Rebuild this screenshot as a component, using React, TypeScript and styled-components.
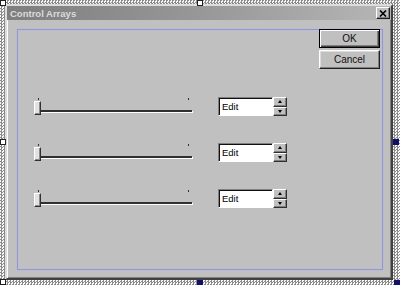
import React from "react";
import styled, { createGlobalStyle } from "styled-components";

const GlobalStyle = createGlobalStyle`
  html, body {
    margin: 0;
    padding: 0;
    width: 400px;
    height: 285px;
    overflow: hidden;
    background: #ffffff;
  }
  #root {
    width: 400px;
    height: 285px;
  }
`;

const ui = `"Liberation Sans", Arial, sans-serif`;

// hatched selection frame of the form designer
const Selection = styled.div`
  position: relative;
  box-sizing: border-box;
  width: 400px;
  height: 285px;
  padding: 4px 7px 5px 5px;
  background: repeating-conic-gradient(#8a8a8a 0 25%, #f8f8f8 0 50%) 0 0 / 3px 3px;
`;

const Handle = styled.div<{ $filled?: boolean }>`
  position: absolute;
  box-sizing: border-box;
  width: 6px;
  height: 6px;
  background: ${(p) => (p.$filled ? "#10106a" : "#ffffff")};
  border: 1px solid ${(p) => (p.$filled ? "#10106a" : "#202020")};
`;

const Window = styled.div`
  box-sizing: border-box;
  width: 100%;
  height: 100%;
  display: flex;
  flex-direction: column;
  background: #c0c0c0;
  border: 2px solid;
  border-color: #dcdcdc #404040 #404040 #dcdcdc;
  box-shadow: inset 1px 1px 0 #ffffff, inset -1px -1px 0 #808080;
`;

const TitleBar = styled.div`
  height: 14px;
  display: flex;
  align-items: center;
  justify-content: space-between;
  padding: 0 1px 0 3px;
  background: linear-gradient(90deg, #7e7e7e 0%, #9a9a9a 55%, #b6b6b6 100%);
`;

const Title = styled.span`
  font-family: ${ui};
  font-weight: bold;
  font-size: 9.5px;
  color: #dcdcdc;
`;

const CloseBox = styled.div`
  box-sizing: border-box;
  width: 14px;
  height: 12px;
  display: flex;
  align-items: center;
  justify-content: center;
  background: #c0c0c0;
  border: 1px solid;
  border-color: #ffffff #202020 #202020 #ffffff;
  box-shadow: inset -1px -1px 0 #808080;
`;

const Body = styled.div`
  flex: 1;
  display: flex;
  padding: 9px 8px 8px 10px;
`;

const DesignArea = styled.div`
  flex: 1;
  display: flex;
  flex-direction: column;
  border: 1px solid #9898c4;
  box-shadow: 0 0 0 1px #babad4, inset 0 0 0 1px #bcbcd4;
  padding: 0 2px 0 16px;
`;

const ButtonStack = styled.div`
  display: flex;
  flex-direction: column;
  align-items: flex-end;
  gap: 2px;
  margin-top: -1px;
`;

const Button = styled.div<{ $default?: boolean }>`
  box-sizing: border-box;
  width: 61px;
  height: 19px;
  display: flex;
  align-items: center;
  justify-content: center;
  font-family: ${ui};
  font-size: 10px;
  color: #101010;
  background: #c0c0c0;
  border: 1px solid;
  border-color: ${(p) =>
    p.$default ? "#000000" : "#ffffff #202020 #202020 #ffffff"};
  box-shadow: ${(p) =>
    p.$default
      ? "inset 1px 1px 0 #ffffff, inset -1px -1px 0 #404040, inset -2px -2px 0 #808080"
      : "inset -1px -1px 0 #808080, inset 1px 1px 0 #dcdcdc"};
`;

const Rows = styled.div`
  display: flex;
  flex-direction: column;
  gap: 27px;
  margin-top: 28px;
`;

const Row = styled.div`
  display: flex;
  align-items: flex-start;
  gap: 26px;
  height: 19px;
`;

const Slider = styled.div`
  width: 158px;
  display: flex;
  flex-direction: column;
  gap: 1px;
  margin-top: 1px;
`;

const TickRow = styled.div`
  height: 2px;
  display: flex;
  justify-content: space-between;
  padding: 0 3px 0 4px;
`;

const Tick = styled.div`
  width: 1px;
  height: 2px;
  background: #303030;
`;

const TrackRow = styled.div`
  height: 14px;
  display: flex;
  align-items: flex-end;
`;

const Thumb = styled.div`
  box-sizing: border-box;
  width: 7px;
  height: 14px;
  background: #e2e2e2;
  border: 1px solid;
  border-color: #ffffff #303030 #303030 #ffffff;
  box-shadow: inset -1px -1px 0 #8a8a8a;
`;

const Track = styled.div`
  flex: 1;
  height: 2px;
  margin-bottom: 3px;
  background: #303030;
  box-shadow: 0 1px 0 #ffffff, 1px 1px 0 #ffffff;
`;

const Spin = styled.div`
  display: flex;
`;

const EditBox = styled.div`
  box-sizing: border-box;
  width: 55px;
  height: 19px;
  padding: 3px 0 0 3px;
  background: #ffffff;
  border: 1px solid;
  border-color: #808080 #ffffff #ffffff #808080;
  box-shadow: inset 1px 1px 0 #101010;
  font-family: ${ui};
  font-size: 9.5px;
  color: #000000;
`;

const SpinButtons = styled.div`
  display: flex;
  flex-direction: column;
  width: 14px;
  height: 19px;
`;

const SpinButton = styled.div<{ $down?: boolean }>`
  box-sizing: border-box;
  flex: 1;
  display: flex;
  align-items: center;
  justify-content: center;
  background: #c0c0c0;
  border: 1px solid;
  border-color: #ffffff #303030 #303030 #ffffff;
  box-shadow: inset -1px -1px 0 #808080;

  &::after {
    content: "";
    width: 0;
    height: 0;
    border-left: 2.5px solid transparent;
    border-right: 2.5px solid transparent;
    ${(p) =>
      p.$down ? "border-top: 3px solid #000;" : "border-bottom: 3px solid #000;"}
  }
`;

const rows = ["Edit", "Edit", "Edit"];

const App = () => {
  return (
    <>
      <GlobalStyle />
      <Selection>
        <Window>
          <TitleBar>
            <Title>Control Arrays</Title>
            <CloseBox>
              <svg width="8" height="7" viewBox="0 0 8 7">
                <path
                  d="M1 0.5 L7 6.5 M7 0.5 L1 6.5"
                  stroke="#000"
                  strokeWidth="1.6"
                />
              </svg>
            </CloseBox>
          </TitleBar>
          <Body>
            <DesignArea>
              <ButtonStack>
                <Button $default>OK</Button>
                <Button>Cancel</Button>
              </ButtonStack>
              <Rows>
                {rows.map((label, idx) => (
                  <Row key={idx}>
                    <Slider>
                      <TickRow>
                        <Tick />
                        <Tick />
                      </TickRow>
                      <TrackRow>
                        <Thumb />
                        <Track />
                      </TrackRow>
                    </Slider>
                    <Spin>
                      <EditBox>{label}</EditBox>
                      <SpinButtons>
                        <SpinButton />
                        <SpinButton $down />
                      </SpinButtons>
                    </Spin>
                  </Row>
                ))}
              </Rows>
            </DesignArea>
          </Body>
        </Window>
        <Handle style={{ left: 0, top: 0 }} />
        <Handle style={{ left: 197, top: 0 }} />
        <Handle style={{ left: 0, top: 139 }} />
        <Handle style={{ left: 0, top: 279 }} />
        <Handle $filled style={{ left: 393, top: 139 }} />
        <Handle $filled style={{ left: 197, top: 280 }} />
        <Handle $filled style={{ left: 394, top: 280 }} />
      </Selection>
    </>
  );
};

export default App;
